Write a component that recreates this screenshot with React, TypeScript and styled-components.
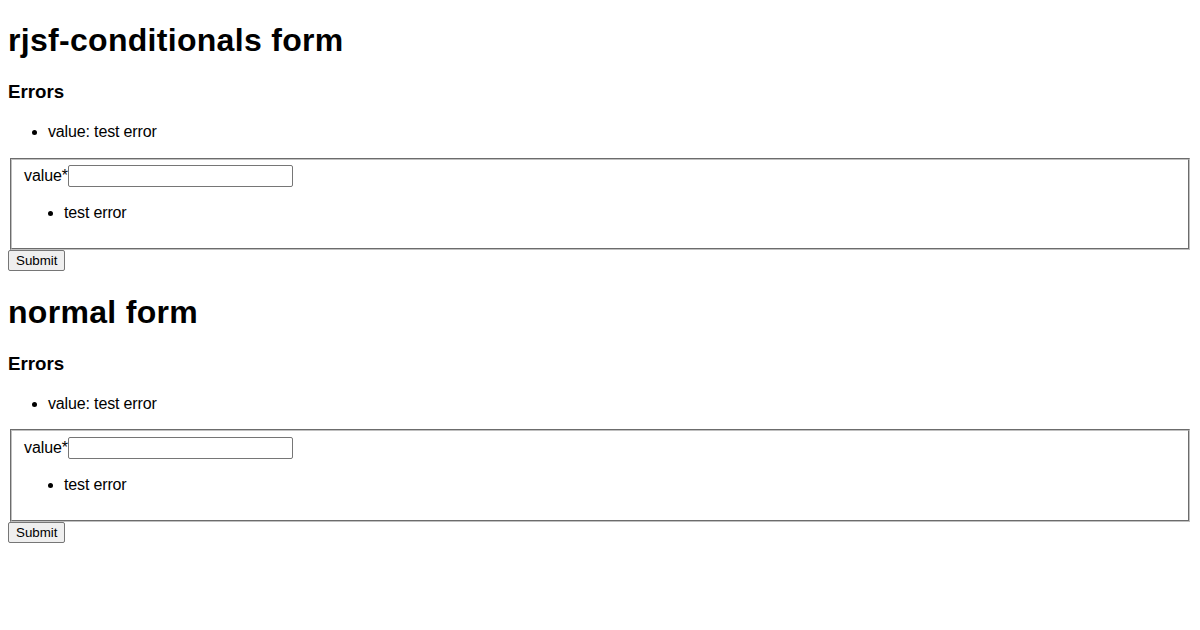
import React from 'react';
import styled, { createGlobalStyle } from 'styled-components';

const GlobalStyle = createGlobalStyle`
    body {
        margin: 0 8px 8px;
        font-family: 'Liberation Sans', Arial, sans-serif;
        font-size: 16px;
        line-height: 1.2;
        color: #000;
        background: #fff;
    }
`;

const Title = styled.h1`
    font-size: 2em;
    font-weight: bold;
    letter-spacing: 0.3px;
    margin: 0.67em 0;
`;

const ErrorTitle = styled.h3`
    font-size: 1.17em;
    font-weight: bold;
    margin: 1em 0;
`;

const List = styled.ul`
    margin: 1em 0;
    padding-left: 40px;
    list-style: disc;
    letter-spacing: -0.15px;
`;

const Fieldset = styled.fieldset`
    margin: 0 2px;
    padding: 0.35em 0.75em 0.625em;
    border: 2px groove rgb(192, 192, 192);
    min-width: min-content;
`;

const Label = styled.label`
    font-size: 16px;
    letter-spacing: -0.1px;
`;

const TextInput = styled.input`
    font-family: 'Liberation Sans', Arial, sans-serif;
    font-size: 13.33px;
    width: 225px;
    height: 22px;
    box-sizing: border-box;
    padding: 1px 2px;
    border: 1px solid #767676;
    border-radius: 2px;
    vertical-align: baseline;
`;

const SubmitButton = styled.button`
    font-family: 'Liberation Sans', Arial, sans-serif;
    font-size: 13.33px;
    padding: 1px 7px;
    height: 21px;
    border: 1px solid #767676;
    border-radius: 2px;
    background: #efefef;
    color: #000;
`;

interface FormBlockProps {
    title: string;
}

const FormBlock: React.FC<FormBlockProps> = ({ title }) => (
    <section>
        <Title>{title}</Title>
        <ErrorTitle>Errors</ErrorTitle>
        <List>
            <li>value: test error</li>
        </List>
        <form onSubmit={e => e.preventDefault()}>
            <Fieldset>
                <div>
                    <Label>value*</Label>
                    <TextInput type="text" />
                </div>
                <List>
                    <li>test error</li>
                </List>
            </Fieldset>
            <SubmitButton type="submit">Submit</SubmitButton>
        </form>
    </section>
);

const App: React.FC = () => (
    <>
        <GlobalStyle />
        <FormBlock title="rjsf-conditionals form" />
        <FormBlock title="normal form" />
    </>
);

export default App;
